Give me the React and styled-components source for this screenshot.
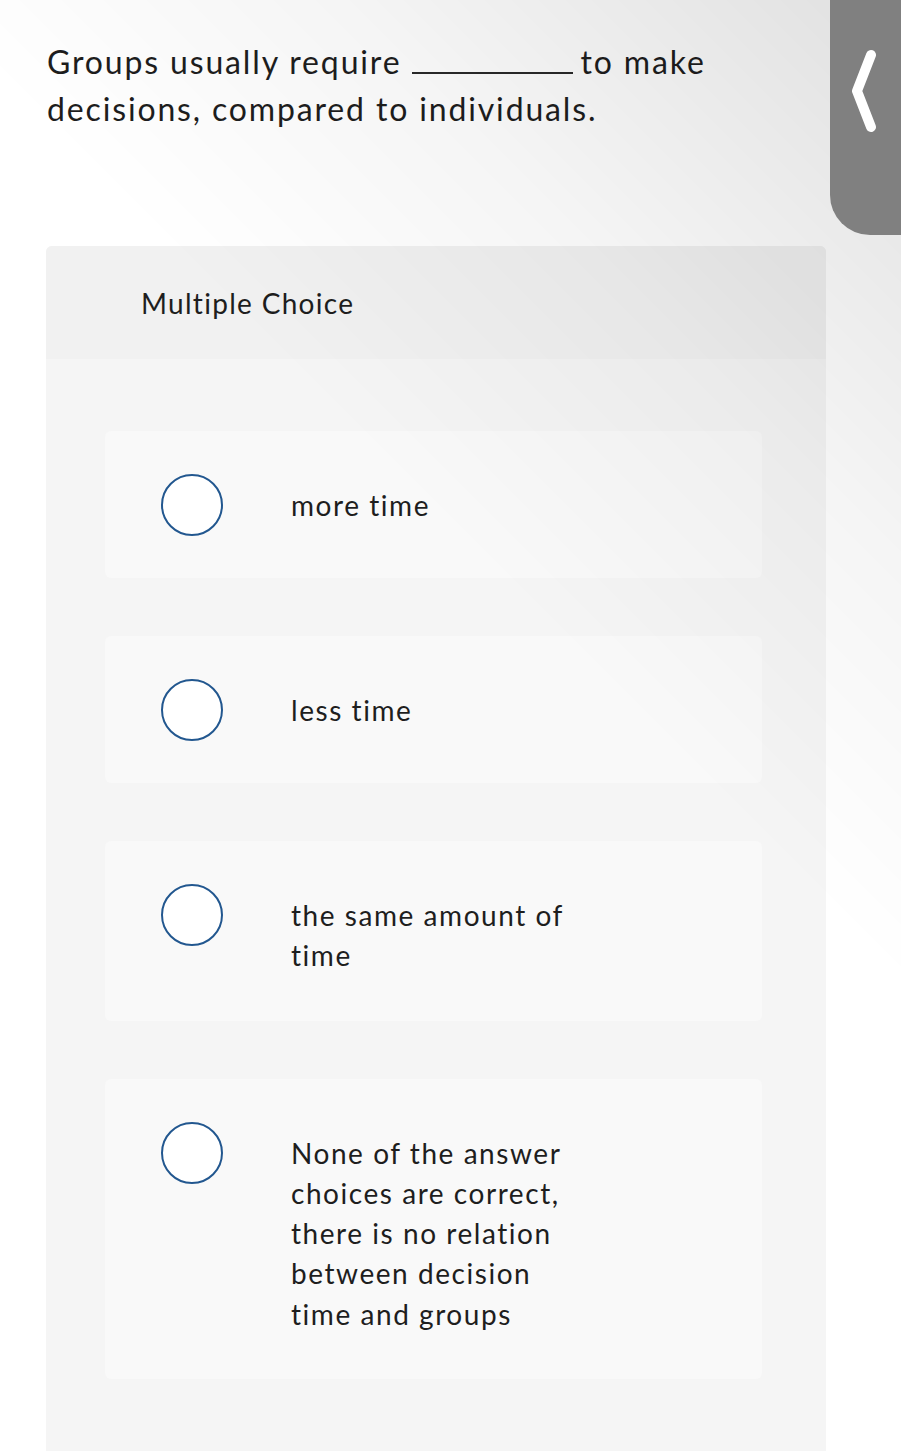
import React from "react";
import styled, { createGlobalStyle } from "styled-components";

const GlobalStyle = createGlobalStyle`
  html, body {
    margin: 0;
    padding: 0;
  }
  body {
    font-family: Lato, "Open Sans", "Liberation Sans", sans-serif;
    color: #1e1e1e;
    background: #ffffff;
    min-height: 1451px;
    overflow: hidden;
  }
  body::after {
    content: "";
    position: fixed;
    inset: 0;
    pointer-events: none;
    background: linear-gradient(225deg, rgba(0, 0, 0, 0.12) 0%, rgba(0, 0, 0, 0.04) 24%, rgba(0, 0, 0, 0) 42%);
  }
`;

const Page = styled.main`
  position: relative;
  padding: 38px 0 0 46px;
  width: 780px;
`;

const Question = styled.p`
  margin: 0 40px 0 1px;
  font-size: 32px;
  line-height: 47px;
  letter-spacing: 1.85px;
`;

const Blank = styled.span`
  display: inline-block;
  width: 161px;
  height: 24px;
  border-bottom: 2px solid #2a2a2a;
  margin-right: 8px;
`;

const Card = styled.section`
  margin-top: 114px;
  background: #f5f5f5;
  border-radius: 6px 6px 0 0;
  min-height: 1210px;
  padding-bottom: 80px;
`;

const CardHeader = styled.header`
  display: flex;
  align-items: center;
  height: 113px;
  padding-left: 95px;
  background: #f1f1f1;
  border-radius: 6px 6px 0 0;
  font-size: 28px;
  letter-spacing: 1.3px;
`;

const Options = styled.div`
  display: flex;
  flex-direction: column;
  gap: 58px;
  padding: 72px 64px 0 59px;
`;

const Option = styled.label`
  display: flex;
  align-items: flex-start;
  gap: 68px;
  padding: 43px 56px 42px;
  background: #f9f9f9;
  border-radius: 6px;
  cursor: pointer;
`;

const Radio = styled.span`
  flex: none;
  width: 58px;
  height: 58px;
  border: 2px solid #22578f;
  border-radius: 50%;
  background: #ffffff;
`;

const OptionText = styled.span`
  max-width: 292px;
  padding: 11px 0 3px;
  font-size: 28px;
  line-height: 40.3px;
  letter-spacing: 1.55px;
`;

const SideTab = styled.button`
  position: fixed;
  top: 0;
  right: 0;
  z-index: 2;
  width: 71px;
  height: 235px;
  padding: 0;
  border: none;
  border-radius: 0 0 0 40px;
  background: #808080;
  display: flex;
  justify-content: center;
  padding-top: 49px;
  cursor: pointer;
`;

const choices = [
  "more time",
  "less time",
  "the same amount of time",
  "None of the answer choices are correct, there is no relation between decision time and groups",
];

export default function App() {
  return (
    <>
      <GlobalStyle />
      <Page>
        <Question>
          Groups usually require <Blank aria-hidden="true" />to make decisions, compared to individuals.
        </Question>
        <Card>
          <CardHeader>Multiple Choice</CardHeader>
          <Options>
            {choices.map((c) => (
              <Option key={c}>
                <Radio />
                <OptionText>{c}</OptionText>
              </Option>
            ))}
          </Options>
        </Card>
      </Page>
      <SideTab aria-label="Back">
        <svg width="30" height="84" viewBox="0 0 30 84">
          <path
            d="M20 6 L6 42 L20 78"
            fill="none"
            stroke="#ffffff"
            strokeWidth="10"
            strokeLinecap="round"
            strokeLinejoin="round"
          />
        </svg>
      </SideTab>
    </>
  );
}
